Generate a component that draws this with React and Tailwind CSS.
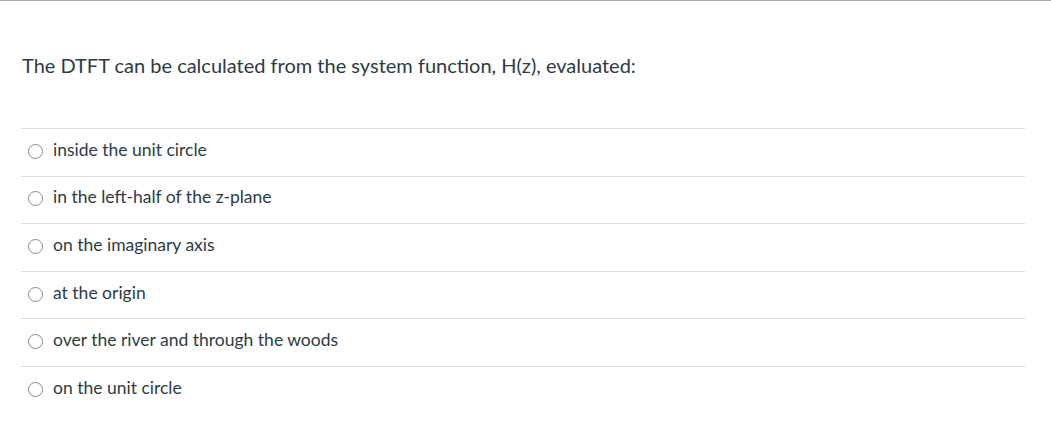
export default function App() {
  const options = [
    "inside the unit circle",
    "in the left-half of the z-plane",
    "on the imaginary axis",
    "at the origin",
    "over the river and through the woods",
    "on the unit circle",
  ];
  return (
    <div className="w-[1051px] h-[437px] bg-white border-t border-[#a9a9a9] overflow-hidden" style={{ fontFamily: "Lato, 'Liberation Sans', sans-serif" }}>
      <div className="pl-[21px] w-[1025px]">
        <div className="h-[127px] pt-[50px] pl-[1px]">
          <p className="text-[20px] leading-[28px] text-[#2d3b45]">
            The DTFT can be calculated from the system function, H(z), evaluated:
          </p>
        </div>
        {options.map((o) => (
          <div key={o} className="h-[47.6px] border-t border-[#dcdcdc] flex items-center pl-[7px]">
            <span className="w-[15px] h-[15px] rounded-full border border-[#8a8a8a] bg-white shrink-0 -mt-[2px]"></span>
            <span className="ml-[10px] text-[17.5px] leading-[20px] text-[#2d3b45] -mt-[5px]">{o}</span>
          </div>
        ))}
      </div>
    </div>
  );
}
